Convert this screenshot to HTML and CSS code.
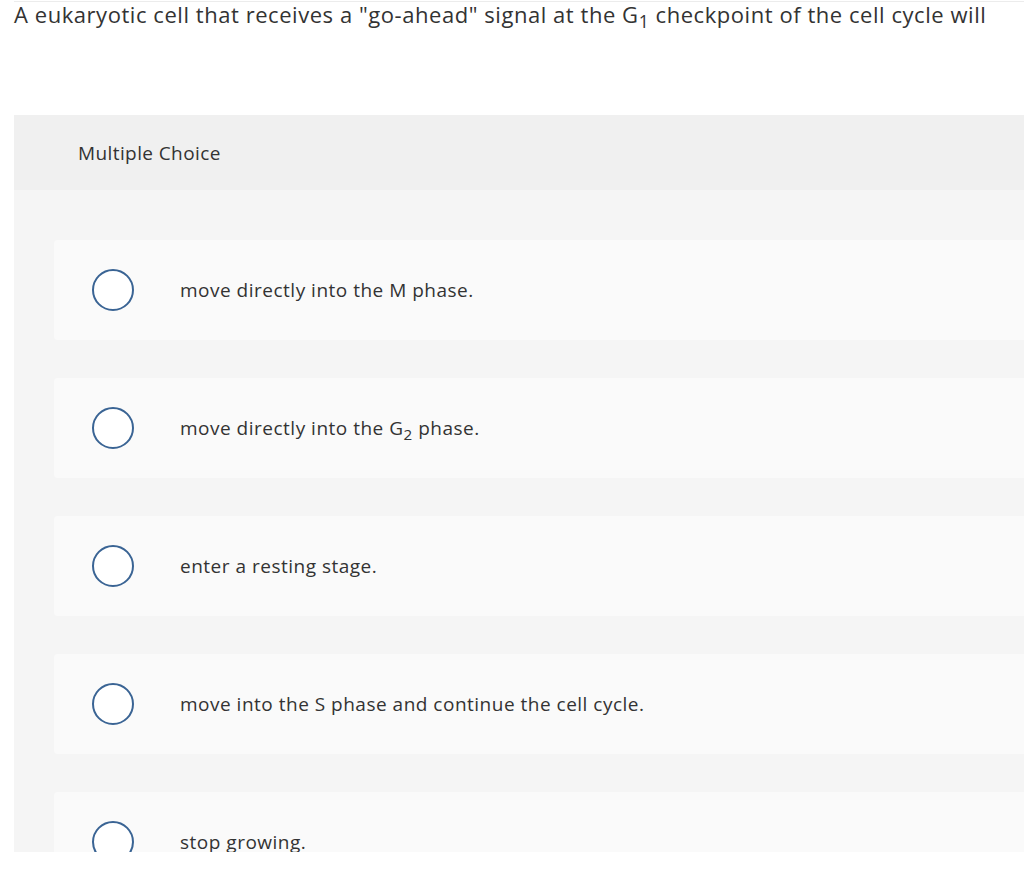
FILE: index.html
```html
<!DOCTYPE html>
<html>
<head>
<meta charset="utf-8">
<link rel="stylesheet" href="styles.css">
</head>
<body>
<div class="page">
  <p class="title">A eukaryotic cell that receives a "go-ahead" signal at the G<sub>1</sub> checkpoint of the cell cycle will</p>
  <div class="panel">
    <div class="header">Multiple Choice</div>
    <div class="options">
      <div class="card"><span class="radio"></span><span class="label">move directly into the M phase.</span></div>
      <div class="card"><span class="radio"></span><span class="label">move directly into the G<sub>2</sub> phase.</span></div>
      <div class="card"><span class="radio"></span><span class="label">enter a resting stage.</span></div>
      <div class="card"><span class="radio"></span><span class="label">move into the S phase and continue the cell cycle.</span></div>
      <div class="card"><span class="radio"></span><span class="label">stop growing.</span></div>
    </div>
  </div>
</div>
</body>
</html>
```

FILE: styles.css
```css
html, body {
  margin: 0;
  padding: 0;
  background: #fff;
  overflow: hidden;
}
.page {
  padding-left: 14px;
  height: 852px;
  overflow: hidden;
  font-family: "Open Sans", "Lato", sans-serif;
  color: #333;
}
.title {
  margin: 1px 0 0 0;
  border-top: 1px solid #ececec;
  padding-top: 0;
  font-size: 22px;
  line-height: 24px;
  letter-spacing: 0.55px;
  white-space: nowrap;
}
.title sub, .label sub {
  font-size: 0.8em;
  vertical-align: -0.3em;
  line-height: 0;
}
.panel {
  margin-top: 89px;
  width: 1100px;
  background: #f5f5f5;
}
.header {
  height: 75px;
  background: #f0f0f0;
  padding-left: 64px;
  display: flex;
  align-items: center;
  font-size: 19px;
  letter-spacing: 0.4px;
}
.options {
  padding: 50px 0 0 40px;
  display: flex;
  flex-direction: column;
  gap: 38px;
}
.card {
  height: 100px;
  background: #fafafa;
  border-radius: 4px;
  display: flex;
  align-items: center;
  padding-left: 38px;
}
.radio {
  width: 38px;
  height: 38px;
  border: 2px solid #3a6494;
  border-radius: 50%;
  background: #fff;
  flex: none;
}
.label {
  margin-left: 46px;
  font-size: 19px;
  letter-spacing: 0.5px;
}
```
